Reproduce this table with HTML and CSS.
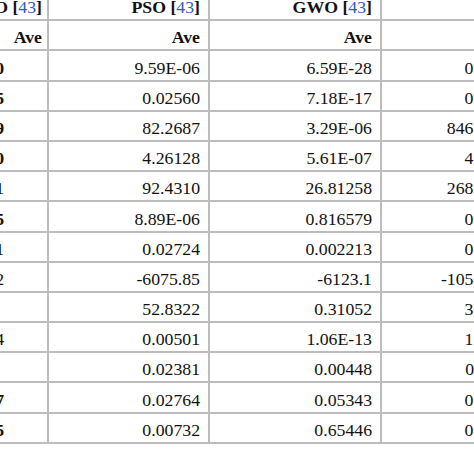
FILE: index.html
```html
<!DOCTYPE html>
<html>
<head>
<meta charset="utf-8">
<link rel="stylesheet" href="styles.css">
</head>
<body>
<div class="viewport">
<table class="results">
  <colgroup>
    <col class="c1"><col class="c2"><col class="c3"><col class="c4">
  </colgroup>
  <thead>
    <tr class="head">
      <th class="first">MFO [<a class="ref">43</a>]</th>
      <th>PSO [<a class="ref">43</a>]</th>
      <th>GWO [<a class="ref">43</a>]</th>
      <th>DE [<a class="ref">43</a>]</th>
    </tr>
    <tr class="head">
      <th class="first">Ave</th>
      <th>Ave</th>
      <th>Ave</th>
      <th>Ave</th>
    </tr>
  </thead>
  <tbody>
    <tr><td class="first"><b>0</b></td><td>9.59E-06</td><td>6.59E-28</td><td>0.0172354</td></tr>
    <tr><td class="first"><b>5</b></td><td>0.02560</td><td>7.18E-17</td><td>0.0293418</td></tr>
    <tr><td class="first"><b>9</b></td><td>82.2687</td><td>3.29E-06</td><td>846.2391857</td></tr>
    <tr><td class="first"><b>0</b></td><td>4.26128</td><td>5.61E-07</td><td>4.2591347</td></tr>
    <tr><td class="first">1</td><td>92.4310</td><td>26.81258</td><td>268.1594712</td></tr>
    <tr><td class="first"><b>5</b></td><td>8.89E-06</td><td>0.816579</td><td>0.0129635</td></tr>
    <tr><td class="first">1</td><td>0.02724</td><td>0.002213</td><td>0.0445127</td></tr>
    <tr><td class="first">2</td><td>-6075.85</td><td>-6123.1</td><td>-10546.38527</td></tr>
    <tr><td class="first short">7</td><td>52.8322</td><td>0.31052</td><td>30.257164</td></tr>
    <tr><td class="first">4</td><td>0.00501</td><td>1.06E-13</td><td>1.0341752</td></tr>
    <tr><td class="first short">8</td><td>0.02381</td><td>0.00448</td><td>0.0112693</td></tr>
    <tr><td class="first"><b>7</b></td><td>0.02764</td><td>0.05343</td><td>0.0331845</td></tr>
    <tr><td class="first"><b>5</b></td><td>0.00732</td><td>0.65446</td><td>0.0582761</td></tr>
  </tbody>
</table>
</div>
</body>
</html>
```

FILE: styles.css
```css
html, body {
  margin: 0;
  padding: 0;
  background: #ffffff;
}

.viewport {
  width: 474px;
  height: 474px;
  overflow: hidden;
  background: #ffffff;
}

.results {
  border-collapse: collapse;
  table-layout: fixed;
  width: 601px;
  margin-left: -52px;
  margin-top: -9px;
  font-family: "Liberation Serif", "Times New Roman", serif;
  font-size: 17.75px;
  line-height: 20px;
  color: #111111;
}

.c1 { width: 100px; }
.c2 { width: 161px; }
.c3 { width: 172px; }
.c4 { width: 168px; }

.results th,
.results td {
  border: 2px solid #bcbcbc;
  border-top: none;
  height: 26.2px;
  padding: 0 8px 2px 0;
  text-align: right;
  vertical-align: bottom;
  white-space: nowrap;
}

.results th {
  font-weight: bold;
}

.results th:first-child,
.results td:first-child {
  border-left: none;
}

.results td.first {
  padding-right: 43px;
}

.results td.short {
  padding-right: 60px;
}

.results th.first {
  padding-right: 5px;
}

.ref {
  color: #3559c8;
  font-weight: normal;
}
```
